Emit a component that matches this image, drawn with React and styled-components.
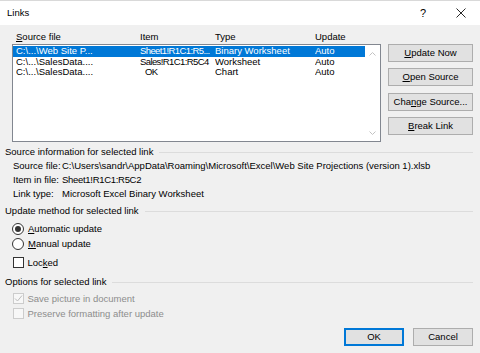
import React from "react";
import styled, { createGlobalStyle } from "styled-components";

const Global = createGlobalStyle`
  html, body { margin: 0; padding: 0; background: #f0f0f0; }
  body { font-family: "Liberation Sans", Arial, sans-serif; font-size: 9.5px; color: #000; }
  #root { width: 480px; height: 353px; }
  * { box-sizing: border-box; }
`;

const Window = styled.div`
  width: 480px;
  height: 353px;
  background: #f0f0f0;
  display: flex;
  flex-direction: column;
  overflow: hidden;
`;

const TitleBar = styled.div`
  height: 25px;
  background: #fff;
  border-top: 1px solid #d9d9d9;
  display: flex;
  align-items: center;
  padding-left: 7px;
  flex: none;
`;

const Title = styled.div`
  flex: 1;
  line-height: 24px;
`;

const TitleButtons = styled.div`
  display: flex;
  align-items: center;
  height: 24px;
`;

const HelpGlyph = styled.div`
  width: 30px;
  text-align: center;
  font-size: 11px;
  line-height: 24px;
  margin-right: 4px;
`;

const CloseBox = styled.div`
  width: 38px;
  display: flex;
  justify-content: center;
  align-items: center;
`;

const Body = styled.div`
  flex: 1;
  display: flex;
  flex-direction: column;
  padding: 0 7px 0 5px;
`;

const TopArea = styled.div`
  display: flex;
  padding-left: 7px;
  gap: 7px;
`;

const ListColumn = styled.div`
  width: 369px;
  display: flex;
  flex-direction: column;
`;

const ColumnsGrid = styled.div`
  display: grid;
  grid-template-columns: 124px 75px 100px 1fr;
`;

const HeaderRow = styled(ColumnsGrid)`
  padding: 6px 0 1px 4px;
  line-height: 12px;
  height: 19px;
`;

const ListBox = styled.div`
  height: 98px;
  border: 1px solid #828790;
  background: #fff;
  display: flex;
`;

const ListContent = styled.div`
  flex: 1;
  padding-top: 1px;
`;

const Row = styled(ColumnsGrid)`
  height: 10.5px;
  line-height: 10.5px;
  padding-left: 3px;
  background: ${(p) => (p.$selected ? "#0078d7" : "transparent")};
  color: ${(p) => (p.$selected ? "#fff" : "#000")};
  white-space: nowrap;
`;

const Cell = styled.span`
  padding-left: ${(p) => p.$indent || 0}px;
  letter-spacing: ${(p) => (p.$tight ? "-0.6px" : "normal")};
  overflow: hidden;
`;

const ScrollBar = styled.div`
  width: 15px;
  display: flex;
  flex-direction: column;
  justify-content: space-between;
  align-items: center;
  padding: 6px 0 5px;
`;

const ButtonColumn = styled.div`
  display: flex;
  flex-direction: column;
  gap: 6.4px;
  margin-top: 19px;
`;

const Button = styled.div`
  width: ${(p) => p.$width || 85}px;
  height: 18px;
  background: #e1e1e1;
  border: 1px solid ${(p) => (p.$default ? "#0078d7" : "#adadad")};
  box-shadow: ${(p) => (p.$default ? "inset 0 0 0 1px #0078d7" : "none")};
  display: flex;
  align-items: center;
  justify-content: center;
  line-height: 16px;
  white-space: nowrap;
`;

const Key = styled.span`
  text-decoration: underline;
  text-underline-offset: 1px;
`;

const SectionHeader = styled.div`
  display: flex;
  align-items: center;
  height: 14px;
  margin-top: ${(p) => p.$top || 0}px;
  line-height: 14px;
`;

const SectionLine = styled.div`
  flex: 1;
  height: 1px;
  background: #dcdcdc;
  margin-left: 6px;
`;

const InfoGrid = styled.div`
  display: grid;
  grid-template-columns: 49px 1fr;
  padding-left: 8px;
  line-height: 14px;
  white-space: nowrap;
`;

const InfoValue = styled.span`
  letter-spacing: ${(p) => p.$spacing || "normal"};
`;

const OptionRow = styled.label`
  display: flex;
  align-items: center;
  height: 15px;
  padding-left: 7px;
  gap: 4px;
  margin-top: ${(p) => p.$top || 0}px;
  color: ${(p) => (p.$disabled ? "#8d8d8d" : "#000")};
`;

const Radio = styled.span`
  width: 12px;
  height: 12px;
  border-radius: 50%;
  border: 1px solid #333;
  background: #fff;
  display: flex;
  align-items: center;
  justify-content: center;
  &::after {
    content: "";
    width: 6px;
    height: 6px;
    border-radius: 50%;
    background: ${(p) => (p.$checked ? "#333" : "transparent")};
  }
`;

const Check = styled.span`
  width: 11px;
  height: 11px;
  margin-left: 0.5px;
  border: 1px solid ${(p) => (p.$disabled ? "#cccccc" : "#333")};
  background: ${(p) => (p.$disabled ? "#f7f7f7" : "#fff")};
  display: flex;
  align-items: center;
  justify-content: center;
`;

const Footer = styled.div`
  display: flex;
  justify-content: flex-end;
  gap: 9px;
  margin-top: 7px;
`;

const Chevron = ({ up }) => (
  <svg width="7" height="5" viewBox="0 0 7 5">
    <path
      d={up ? "M0.5 4.5 L3.5 1.5 L6.5 4.5" : "M0.5 0.5 L3.5 3.5 L6.5 0.5"}
      fill="none"
      stroke="#c2c2c2"
      strokeWidth="1"
    />
  </svg>
);

const CloseIcon = () => (
  <svg width="10" height="10" viewBox="0 0 10 10">
    <path d="M0.5 0.5 L9.5 9.5 M9.5 0.5 L0.5 9.5" stroke="#111" strokeWidth="0.9" />
  </svg>
);

const Tick = () => (
  <svg width="9" height="9" viewBox="0 0 9 9">
    <path d="M1 4.5 L3.5 7 L8 1.5" fill="none" stroke="#bcbcbc" strokeWidth="1" />
  </svg>
);

const links = [
  { src: "C:\\...\\Web Site P...", item: "Sheet1!R1C1:R5...", type: "Binary Worksheet", upd: "Auto", selected: true },
  { src: "C:\\...\\SalesData....", item: "Sales!R1C1:R5C4", type: "Worksheet", upd: "Auto" },
  { src: "C:\\...\\SalesData....", item: "OK", indent: 5, type: "Chart", upd: "Auto" },
];

export default function App() {
  return (
    <>
      <Global />
      <Window>
        <TitleBar>
          <Title>Links</Title>
          <TitleButtons>
            <HelpGlyph>?</HelpGlyph>
            <CloseBox>
              <CloseIcon />
            </CloseBox>
          </TitleButtons>
        </TitleBar>
        <Body>
          <TopArea>
            <ListColumn>
              <HeaderRow>
                <span>
                  <Key>S</Key>ource file
                </span>
                <span>Item</span>
                <span>Type</span>
                <span>Update</span>
              </HeaderRow>
              <ListBox>
                <ListContent>
                  {links.map((l, i) => (
                    <Row key={i} $selected={l.selected}>
                      <Cell>{l.src}</Cell>
                      <Cell $indent={l.indent} $tight>
                        {l.item}
                      </Cell>
                      <Cell>{l.type}</Cell>
                      <Cell>{l.upd}</Cell>
                    </Row>
                  ))}
                </ListContent>
                <ScrollBar>
                  <Chevron up />
                  <Chevron />
                </ScrollBar>
              </ListBox>
            </ListColumn>
            <ButtonColumn>
              <Button>
                <span>
                  <Key>U</Key>pdate Now
                </span>
              </Button>
              <Button>
                <span>
                  <Key>O</Key>pen Source
                </span>
              </Button>
              <Button>
                <span>
                  Cha<Key>n</Key>ge Source...
                </span>
              </Button>
              <Button>
                <span>
                  <Key>B</Key>reak Link
                </span>
              </Button>
            </ButtonColumn>
          </TopArea>

          <SectionHeader $top={3}>
            <span>Source information for selected link</span>
            <SectionLine />
          </SectionHeader>
          <InfoGrid>
            <span>Source file:</span>
            <InfoValue>
              C:\Users\sandr\AppData\Roaming\Microsoft\Excel\Web Site Projections (version 1).xlsb
            </InfoValue>
            <span>Item in file:</span>
            <InfoValue $spacing="-0.3px">Sheet1!R1C1:R5C2</InfoValue>
            <span>Link type:</span>
            <InfoValue>Microsoft Excel Binary Worksheet</InfoValue>
          </InfoGrid>

          <SectionHeader $top={3}>
            <span>Update method for selected link</span>
            <SectionLine />
          </SectionHeader>
          <OptionRow $top={3}>
            <Radio $checked />
            <span>
              <Key>A</Key>utomatic update
            </span>
          </OptionRow>
          <OptionRow>
            <Radio />
            <span>
              <Key>M</Key>anual update
            </span>
          </OptionRow>
          <OptionRow $top={4}>
            <Check />
            <span>
              Loc<Key>k</Key>ed
            </span>
          </OptionRow>

          <SectionHeader $top={5}>
            <span>Options for selected link</span>
            <SectionLine />
          </SectionHeader>
          <OptionRow $top={2} $disabled>
            <Check $disabled>
              <Tick />
            </Check>
            <span>Save picture in document</span>
          </OptionRow>
          <OptionRow $disabled>
            <Check $disabled />
            <span>Preserve formatting after update</span>
          </OptionRow>

          <Footer>
            <Button $width={60} $default>
              OK
            </Button>
            <Button $width={60}>Cancel</Button>
          </Footer>
        </Body>
      </Window>
    </>
  );
}
